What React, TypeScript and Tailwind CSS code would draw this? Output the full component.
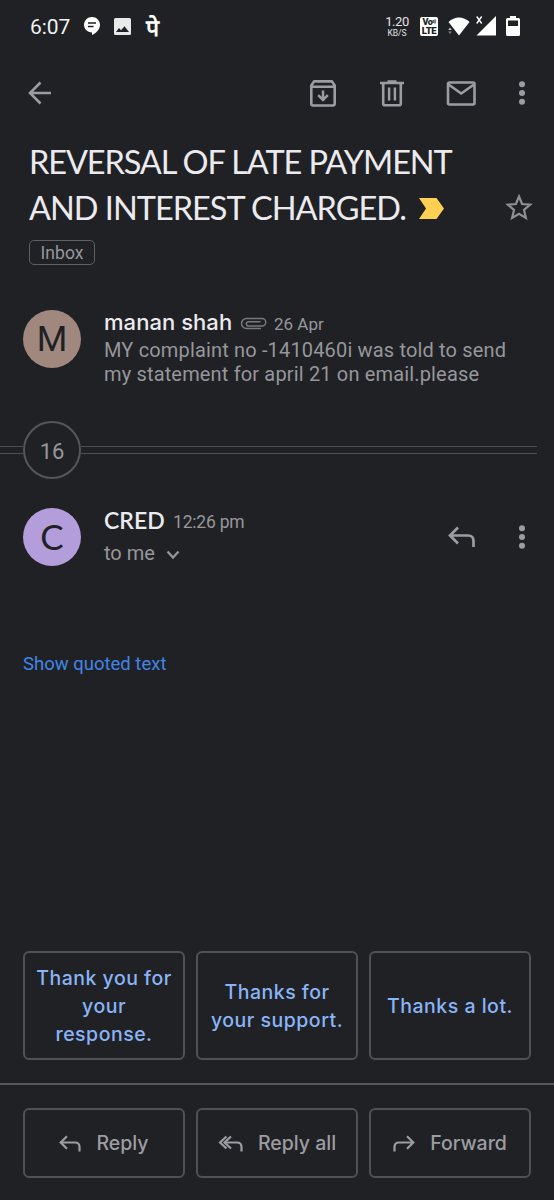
import type { ReactNode } from "react";

const quickReplies = [
  ["Thank you for", "your", "response."],
  ["Thanks for", "your support."],
  ["Thanks a lot."],
];

function Svg({ w, h, className = "", children }: { w: number; h: number; className?: string; children: ReactNode }) {
  return (
    <svg width={w} height={h} viewBox={`0 0 ${w} ${h}`} fill="none" className={`shrink-0 ${className}`}>
      {children}
    </svg>
  );
}

function Dots() {
  return (
    <Svg w={6} h={24}>
      <g fill="#9c9da2">
        <circle cx="3" cy="3.2" r="3" />
        <circle cx="3" cy="12" r="3" />
        <circle cx="3" cy="20.8" r="3" />
      </g>
    </Svg>
  );
}

function StatusBar() {
  return (
    <div className="flex h-[52px] items-center pl-[30px] pr-[34px] text-white">
      <span className="w-[54px] pt-[2px] text-[21px] leading-none tracking-[-0.1px] text-[#f1f1f2]">6:07</span>
      {/* Chat */}
      <Svg w={16} h={18}>
        <path d="M8 0C3.6 0 0 3.5 0 7.8s3.4 7.5 8 7.7V18c4.500-2 8-5.700 8-10.200C16 3.500 12.400 0 8 0Z" fill="#fff" />
        <path d="M4 6h8M4 9.500h5.500" stroke="#202124" strokeWidth="1.300" />
      </Svg>
      {/* Picture */}
      <Svg w={17} h={17} className="ml-[14px]">
        <rect width="17" height="17" rx="1.500" fill="#e9e9ea" />
        <path d="M2 14l3-4 2 2.300 3.500-4L15 14Z" fill="#202124" />
      </Svg>
      <span className="ml-[15px] mt-[4px] text-[23px] font-bold leading-none">पे</span>

      <div className="ml-auto flex items-center">
        <div className="flex w-[24px] flex-col items-center text-[#e3e3e4]">
          <span className="text-[13px] leading-[11px] tracking-[-0.4px]">1.20</span>
          <span className="mt-[2px] text-[8.5px] leading-[8px]">KB/S</span>
        </div>
        <div className="ml-[11px] flex h-[19px] w-[18px] flex-col items-center justify-center rounded-[2px] bg-white text-[#202124]">
          <div className="flex text-[9px] font-black leading-[9px] tracking-[-0.5px]">
            Vo<span className="text-[5px] leading-[6px]">ıı)</span>
          </div>
          <span className="text-[9.5px] font-black leading-[8px] tracking-[-0.4px]">LTE</span>
        </div>
        <Svg w={22} h={19} className="ml-[10px]">
          <path d="M0.500 5C6.500-1 15.500-1 21.500 5L11 18.500Z" fill="#fff" />
          <path d="M0 13l2-2.500 2 2.500Z" fill="#fff" stroke="#202124" strokeWidth=".5" />
          <path d="M0 14.500l2 2.500 2-2.500Z" fill="#77787b" />
        </Svg>
        <Svg w={20} h={20} className="ml-[6px]">
          <path d="M20 0v19.500H0.500Z" fill="#fff" />
          <path d="M.7 0.500l5 7M5.700 0.500l-5 7" stroke="#fff" strokeWidth="1.400" />
        </Svg>
        <Svg w={14} h={20} className="ml-[10px]">
          <path d="M4 0h6v2h2.500q1.500 0 1.500 1.500v15q0 1.500-1.500 1.500h-11Q0 20 0 18.500v-15Q0 2 1.500 2H4Z" fill="#fff" />
          <path d="M2 4.500h10v5.500H2Z" fill="#202124" />
        </Svg>
      </div>
    </div>
  );
}

function Toolbar() {
  return (
    <div className="flex h-[82px] items-center pl-[28px] pr-[29px]">
      <Svg w={24} h={24}>
        <path d="M23 12H2M12.500 1.500L2 12l10.500 10.500" stroke="#9c9da2" strokeWidth="2.600" />
      </Svg>
      <Svg w={26} h={27} className="ml-auto">
        <path d="M1.300 5.500L4 1.400h18l2.700 4.100v18q0 2-2 2H3.300q-2 0-2-2ZM1.300 6.700h23.400" stroke="#9c9da2" strokeWidth="2.600" strokeLinejoin="round" />
        <path d="M13 10.500v9M8.200 15.200l4.800 4.700 4.800-4.700" stroke="#9c9da2" strokeWidth="2.500" />
      </Svg>
      <Svg w={24} h={27} className="ml-[44px]">
        <path d="M0 3h24M7.500 1.500h9M3.200 3v20.500q0 1.800 1.800 1.800h14q1.800 0 1.800-1.800V3" stroke="#9c9da2" strokeWidth="2.600" />
        <path d="M9.100 7.500v13M14.900 7.500v13" stroke="#9c9da2" strokeWidth="2.500" />
      </Svg>
      <Svg w={30} h={25} className="ml-[42px]">
        <rect x="2" y="1.500" width="26.500" height="22" rx="1.500" stroke="#9c9da2" strokeWidth="2.600" />
        <path d="M2.500 3.500L15.200 12.500 28 3.500" stroke="#9c9da2" strokeWidth="2.600" />
      </Svg>
      <div className="ml-[43px]">
        <Dots />
      </div>
    </div>
  );
}

function Subject() {
  return (
    <div className="mt-[5px] flex h-[126px] pl-[29px]">
      <div className="w-[476px]">
        <h1 className="whitespace-nowrap font-['Lato','Liberation_Sans',sans-serif] text-[32.5px] leading-[46px] text-[#ebebef]">
          <div className="tracking-[-1.1px]">REVERSAL OF LATE PAYMENT</div>
          <div className="flex items-center">
            <span className="tracking-[-1px]">AND INTEREST CHARGED.</span>
            <Svg w={25} h={21} className="ml-[13px]">
              <path d="M0 0h17.500L25 10.500 17.500 21H0l7-10.500Z" fill="#fdd053" />
            </Svg>
          </div>
        </h1>
        <div className="mt-[9px] flex h-[25px] w-[66px] items-center justify-center rounded-[5px] border border-[#5f6064] pt-px text-[17.5px] tracking-[0.1px] text-[#96979b]">
          Inbox
        </div>
      </div>
      <Svg w={28} h={27} className="mt-[55px]">
        <path d="M14 2.500l3.100 7.500 8.100.7-6.200 5.300 1.900 8L14 19.800l-6.900 4.200 1.900-8-6.200-5.300 8.100-.7Z" stroke="#8e8f93" strokeWidth="2.200" />
      </Svg>
    </div>
  );
}

function Avatar({ letter, className }: { letter: string; className: string }) {
  return (
    <div className={`flex size-[58px] shrink-0 items-center justify-center rounded-full text-[#202124] ${className}`}>
      {letter}
    </div>
  );
}

function ReplyArrow({ all = false }: { all?: boolean }) {
  return (
    <Svg w={all ? 25 : 22} h={18}>
      {all && <path d="M8.500 1.500L2 7.500l6.500 6" stroke="#9c9da2" strokeWidth="2.200" />}
      <g transform={all ? "translate(4.500 0)" : undefined} stroke="#9c9da2" strokeWidth="2.200">
        <path d={all ? "M8.500 1.500L2 7.500l6.500 6" : "M8 1.200L1.700 7.500 8 13.800"} />
        <path d={all ? "M2 7.500h12.500q4.500 0 4.500 4.500v4.500" : "M2 7.500h14q4.500 0 4.500 4.500v4.500"} />
      </g>
    </Svg>
  );
}

function Action({ label, children }: { label: string; children: ReactNode }) {
  return (
    <button className="flex h-[70px] items-center justify-center gap-[15px] whitespace-nowrap rounded-[6px] border-2 border-[#505155] pt-px font-['Inter','Liberation_Sans',sans-serif] text-[19.5px] font-[450]">
      {children}
      <span className="pt-px">{label}</span>
    </button>
  );
}

export default function App() {
  return (
    <div className="flex h-[1200px] w-[554px] flex-col overflow-hidden bg-[#202124] font-['Roboto','Liberation_Sans',sans-serif] text-[#96979b]">
      <StatusBar />
      <Toolbar />
      <Subject />

      {/* First message */}
      <div className="mt-[45px] flex h-[111px] pl-[23px]">
        <Avatar letter="M" className="bg-[#a1887f] pt-[2px] text-[35px]" />
        <div className="ml-[23px] whitespace-nowrap">
          <div className="flex h-[26px] items-center">
            <span className="-mt-px w-[128px] font-['Inter','Liberation_Sans',sans-serif] text-[22px] font-medium tracking-[0.05px] text-[#ebebef]">manan shah</span>
            <Svg w={27} h={13} className="ml-[8px]">
              <path d="M21 11.500H6.500a5 5 0 0 1 0-10H22a3.700 3.700 0 0 1 0 7.500H8.500a2.100 2.100 0 0 1 0-4.300H20.500" stroke="#77787c" strokeWidth="1.500" />
            </Svg>
            <span className="ml-[7px] mt-[3px] text-[17px]">26 Apr</span>
          </div>
          <p className="mt-[2px] text-[20px] leading-[24px] tracking-[0.16px]">
            MY complaint no -1410460i was told to send
            <br />
            my statement for april 21 on email.please
          </p>
        </div>
      </div>

      {/* Collapsed messages */}
      <div className="flex h-[58px] items-center">
        <div className="h-[8px] w-[23px] border-y-[1.5px] border-[#4d4e52]" />
        <div className="flex size-[58px] items-center justify-center rounded-full border-2 border-[#55565a] pt-[2px] text-[22px]">16</div>
        <div className="h-[8px] w-[456px] border-y-[1.5px] border-[#4d4e52]" />
      </div>

      {/* Latest message */}
      <div className="mt-[29px] flex h-[58px] pl-[23px] pr-[29px]">
        <Avatar letter="C" className="bg-[#b39ddb] pb-[2px] font-['Lato','Liberation_Sans',sans-serif] text-[35px]" />
        <div className="ml-[23px] whitespace-nowrap">
          <div className="flex h-[26px] items-center">
            <span className="-mt-[2px] w-[61px] font-['Lato','Liberation_Sans',sans-serif] text-[23px] font-semibold text-[#ebebef]">CRED</span>
            <span className="ml-[8px] mt-[2px] text-[17.5px] tracking-[-0.2px]">12:26 pm</span>
          </div>
          <div className="mt-[6px] flex h-[26px] items-center text-[20px]">
            to me
            <Svg w={14} h={10} className="ml-[11px] mt-[3px]">
              <path d="M1.500 1.500L7 7.500l5.500-6" stroke="#96979b" strokeWidth="2.200" />
            </Svg>
          </div>
        </div>
        <div className="ml-auto flex items-center">
          <Svg w={28} h={22}>
            <path d="M10 1.500L2 9.500l8 8M2.500 9.500H20q5.500 0 5.500 5.500v6" stroke="#9c9da2" strokeWidth="2.700" />
          </Svg>
          <div className="ml-[43px]">
            <Dots />
          </div>
        </div>
      </div>

      <a href="#" className="mt-[85px] pl-[23px] text-[18.5px] leading-[26px] text-[#4285e8]">
        Show quoted text
      </a>

      <div className="mt-auto grid grid-cols-3 gap-[11px] px-[23px]">
        {quickReplies.map((lines) => (
          <button
            key={lines[0]}
            className="flex h-[109px] flex-col items-center justify-center whitespace-nowrap rounded-[6px] border-2 border-[#505155] font-['Inter','Liberation_Sans',sans-serif] text-[19.5px] font-medium leading-[28px] tracking-[0.5px] text-[#8ab4f8]"
          >
            {lines.map((line) => (
              <span key={line}>{line}</span>
            ))}
          </button>
        ))}
      </div>

      <div className="mt-[23px] grid h-[117px] shrink-0 grid-cols-3 gap-[11px] border-t-2 border-[#55565a] px-[23px] pt-[23px] text-[#9c9da2]">
        <Action label="Reply">
          <ReplyArrow />
        </Action>
        <Action label="Reply all">
          <ReplyArrow all />
        </Action>
        <Action label="Forward">
          <div className="-scale-x-100">
            <ReplyArrow />
          </div>
        </Action>
      </div>
    </div>
  );
}
